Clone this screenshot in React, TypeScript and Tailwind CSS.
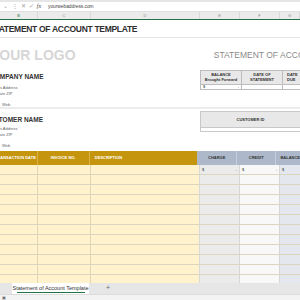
import React from "react";

const rows = Array.from({ length: 12 }, (_, i) => i);

function ColLetter({ w, letter, active }: { w: number; letter: string; active?: boolean }) {
  return (
    <div
      className={`h-full flex items-center justify-center border-r border-[#d8d8d8] text-[4px] ${active ? "text-[#217346]" : "text-[#8a8a8a]"}`}
      style={{ width: w }}
    >
      {letter}
    </div>
  );
}

function AddressLines({ top }: { top: string }) {
  return (
    <>
      <div className={`ml-[-18px] ${top} text-[4px] leading-[6px] text-[#666] whitespace-nowrap`}>Company's Address</div>
      <div className="ml-[-13px] text-[4px] leading-[6px] text-[#666] whitespace-nowrap">City, State ZIP</div>
      <div className="ml-[2px] mt-[5px] text-[4px] leading-[6px] text-[#666] whitespace-nowrap">Web</div>
    </>
  );
}

export default function App() {
  return (
    <div className="w-[300px] h-[300px] overflow-hidden bg-white flex flex-col font-['Liberation_Sans',Arial,sans-serif] text-[#333]">
      {/* formula bar */}
      <div className="h-[2px] bg-[#e6e6e6] shrink-0" />
      <div className="h-[10px] shrink-0 flex items-center bg-white border-b border-[#e0e0e0]">
        <div className="w-[46px] h-full flex items-center text-[5.5px] text-[#a0a0a0]">
          <span className="w-[11px] text-center">⌄</span>
          <span className="w-[8px] text-center">⋮</span>
          <span className="w-[8px] text-center">✕</span>
          <span className="w-[8px] text-center">✓</span>
          <span className="w-[8px] text-center italic text-[#444] font-['Liberation_Serif',serif] text-[6px]">fx</span>
        </div>
        <div className="pl-[2px] text-[4.8px] text-[#444]">yourwebaddress.com</div>
      </div>
      {/* column letters */}
      <div className="h-[8px] shrink-0 flex bg-[#ebebeb] border-b border-[#217346]">
        <ColLetter w={38} letter="B" active />
        <ColLetter w={53} letter="C" />
        <ColLetter w={109} letter="D" />
        <ColLetter w={40} letter="E" />
        <ColLetter w={40} letter="F" />
        <ColLetter w={20} letter="G" />
      </div>

      {/* title row */}
      <div className="h-[18px] shrink-0 flex items-center border-b border-[#e4e4e4]">
        <div className="ml-[-11px] mt-[1px] text-[8.5px] font-bold tracking-[-0.3px] text-[#2f2f2f] whitespace-nowrap">
          STATEMENT OF ACCOUNT TEMPLATE
        </div>
      </div>

      {/* logo row */}
      <div className="h-[31px] shrink-0 flex items-center justify-between">
        <div className="ml-[-10px] mt-[3px] text-[14px] font-bold text-[#d6d6d6] whitespace-nowrap">
          YOUR LOGO
        </div>
        <div className="mr-[-22px] mt-[3px] text-[8.5px] text-[#8a8a8a] whitespace-nowrap">
          STATEMENT OF ACCOUNT
        </div>
      </div>

      {/* company section */}
      <div className="h-[40px] shrink-0 flex border-b-2 border-[#ececec]">
        <div className="w-[200px] flex flex-col">
          <div className="ml-[-10px] mt-[3px] text-[6.5px] font-bold text-[#333] whitespace-nowrap">COMPANY NAME</div>
          <AddressLines top="mt-[3px]" />
        </div>
        <div className="flex-1 flex flex-col mt-[1px]">
          <div className="h-[15px] flex bg-[#e8e8e8] border-t border-b border-[#bdbdbd]">
            <div className="w-[41px] border-l border-[#bdbdbd] flex flex-col items-center justify-center text-[4px] font-bold leading-[4.5px] text-[#333]">
              <span>BALANCE</span>
              <span>Brought Forward</span>
            </div>
            <div className="w-[41px] border-l border-[#bdbdbd] flex flex-col items-center justify-center text-[4px] font-bold leading-[4.5px] text-[#333]">
              <span>DATE OF</span>
              <span>STATEMENT</span>
            </div>
            <div className="flex-1 border-l border-[#bdbdbd] flex flex-col pl-[4px] justify-center text-[4px] font-bold leading-[4.5px] text-[#333] whitespace-nowrap">
              <span>DATE</span>
              <span>DUE</span>
            </div>
          </div>
          <div className="h-[5px] flex border-b border-[#bdbdbd] text-[4px] leading-[4px]">
            <div className="w-[41px] border-l border-[#bdbdbd] flex justify-between px-[2px]">
              <span>$</span>
              <span>-</span>
            </div>
            <div className="w-[41px] border-l border-[#bdbdbd]" />
            <div className="flex-1 border-l border-[#bdbdbd]" />
          </div>
        </div>
      </div>

      {/* customer section */}
      <div className="h-[42px] shrink-0 flex">
        <div className="w-[200px] flex flex-col">
          <div className="ml-[-15px] mt-[6px] text-[6.5px] font-bold text-[#333] whitespace-nowrap">CUSTOMER NAME</div>
          <AddressLines top="mt-[1px]" />
        </div>
        <div className="flex-1 flex flex-col mt-[2px]">
          <div className="h-[17px] bg-[#e8e8e8] border border-r-0 border-[#c8c8c8] flex items-center justify-center text-[4px] font-bold text-[#333]">
            CUSTOMER ID
          </div>
          <div className="h-[4px] border-l border-b border-[#c8c8c8]" />
        </div>
      </div>

      {/* table header */}
      <div className="h-[14px] shrink-0 flex text-[4px] font-bold">
        <div className="w-[38px] bg-[#c5960d] text-white flex items-center border-r border-[#d9b24a] whitespace-nowrap overflow-hidden">
          <span className="ml-[-5px]">TRANSACTION DATE</span>
        </div>
        <div className="w-[53px] bg-[#c5960d] text-white flex items-center justify-center border-r border-[#d9b24a]">
          INVOICE NO.
        </div>
        <div className="w-[109px] bg-[#c5960d] text-white flex items-center pl-[5px]">DESCRIPTION</div>
        <div className="w-[40px] bg-[#adb9ca] text-[#333] flex items-center justify-center border-r border-[#c5ceda]">
          CHARGE
        </div>
        <div className="w-[40px] bg-[#adb9ca] text-[#333] flex items-center justify-center border-r border-[#c5ceda]">
          CREDIT
        </div>
        <div className="flex-1 bg-[#adb9ca] text-[#333] flex items-center pl-[4px] whitespace-nowrap">BALANCE</div>
      </div>

      {/* data rows */}
      <div className="h-[118px] shrink-0 overflow-hidden flex flex-col">
        {rows.map((r) => (
          <div key={r} className="h-[10px] shrink-0 flex border-b border-[#dcd5c0] text-[4px] text-[#333]">
            <div className="w-[38px] bg-[#fff2cc] border-r border-[#e0d6b5]" />
            <div className="w-[53px] bg-[#fff2cc] border-r border-[#e0d6b5]" />
            <div className="w-[109px] bg-[#fff2cc] border-r border-[#d8d8d8]" />
            <div className="w-[40px] bg-[#ebebeb] border-r border-[#d6d6d6] flex items-center justify-between px-[2px]">
              {r === 0 && (
                <>
                  <span>$</span>
                  <span>-</span>
                </>
              )}
            </div>
            <div className="w-[40px] bg-[#f8f8f8] border-r border-[#d6d6d6] flex items-center justify-between px-[2px]">
              {r === 0 && (
                <>
                  <span>$</span>
                  <span>-</span>
                </>
              )}
            </div>
            <div className="flex-1 bg-[#e4e8ee] flex items-center px-[2px]">{r === 0 && <span>$</span>}</div>
          </div>
        ))}
      </div>

      {/* sheet tabs */}
      <div className="h-[11px] shrink-0 flex items-stretch bg-[#e6e6e6]">
        <div className="w-[12px]" />
        <div className="w-[77px] bg-white flex flex-col items-center justify-center">
          <span className="text-[5.5px] leading-[6px] text-[#333] whitespace-nowrap">Statement of Account Template</span>
          <div className="w-[68px] h-[1px] bg-[#217346] mt-[1px]" />
        </div>
        <div className="ml-[17px] flex items-center text-[7px] text-[#666]">+</div>
      </div>
      <div className="flex-1 bg-[#f3f3f3] border-t border-[#dcdcdc] flex items-center pl-[2px]">
        <span className="text-[4px] text-[#666]">▣</span>
      </div>
    </div>
  );
}
